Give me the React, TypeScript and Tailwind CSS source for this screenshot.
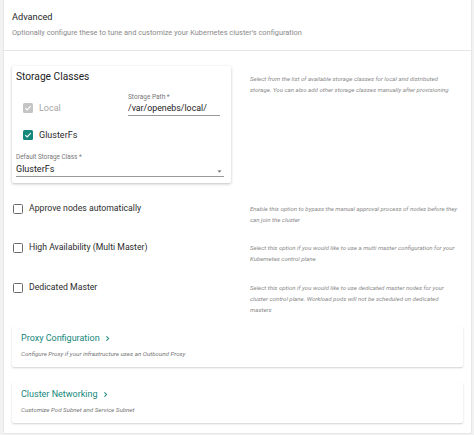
import React from 'react';

function Box({ checked, disabled }: { checked?: boolean; disabled?: boolean }) {
  if (checked) {
    return (
      <span
        className={`flex h-[10px] w-[10px] shrink-0 items-center justify-center rounded-[1.5px] ${
          disabled ? 'bg-[#c4c4c4]' : 'bg-[#15887c]'
        }`}
      >
        <svg viewBox="0 0 10 10" className="h-[8px] w-[8px]">
          <path d="M1.6 5.2 L4 7.4 L8.4 2.6" fill="none" stroke="#fff" strokeWidth="1.4" />
        </svg>
      </span>
    );
  }
  return <span className="block h-[10px] w-[10px] shrink-0 rounded-[1.5px] border-[1.5px] border-[#6b6b6b]" />;
}

function Desc({ lines, className = '' }: { lines: string[]; className?: string }) {
  return (
    <div className={`whitespace-nowrap text-[6.1px] italic leading-[11px] text-[#8a8a8a] ${className}`}>
      {lines.map((d) => (
        <div key={d}>{d}</div>
      ))}
    </div>
  );
}

function OptionRow({ label, desc, h }: { label: string; desc: string[]; h: string }) {
  return (
    <div className={`flex ${h}`}>
      <div className="flex h-[11px] w-[238px] items-center gap-[6px] pl-[1px]">
        <Box />
        <span className="text-[8.7px] leading-[11px] text-[#2d2d2d]">{label}</span>
      </div>
      <Desc lines={desc} />
    </div>
  );
}

function LinkCard({ title, desc }: { title: string; desc: string }) {
  return (
    <div className="h-[41px] rounded-[2px] bg-white px-[9px] pt-[6px] shadow-[0_1px_2px_rgba(0,0,0,0.18)]">
      <div className="flex items-center gap-[4px] text-[9px] leading-[12px] text-[#14867a]">
        {title}
        <svg viewBox="0 0 10 10" className="h-[7px] w-[7px]">
          <path d="M3.5 2 L6.5 5 L3.5 8" fill="none" stroke="#14867a" strokeWidth="1.5" />
        </svg>
      </div>
      <div className="mt-[6px] text-[6.2px] italic leading-[8px] text-[#777]">{desc}</div>
    </div>
  );
}

export default function App() {
  return (
    <div className="h-[435px] w-[474px] bg-[#f2f2f2] pl-[4px] font-['Roboto',sans-serif]">
      <div className="h-[433px] w-[467px] bg-white shadow-[0_0_1px_rgba(0,0,0,0.25)]">
        <div className="h-[51px] border-b border-[#e6e6e6] px-[8px] pt-[11px]">
          <div className="text-[9.2px] leading-[12px] text-[#262626]">Advanced</div>
          <div className="mt-[5px] text-[7.4px] leading-[10px] text-[#8a8a8a]">
            Optionally configure these to tune and customize your Kubernetes cluster's configuration
          </div>
        </div>

        <div className="px-[8px] pt-[15px]">
          <div className="flex h-[137px]">
            <div className="h-[117px] w-[219px] shrink-0 rounded-[2px] bg-white px-[4px] pt-[5px] shadow-[0_1px_3px_rgba(0,0,0,0.25)]">
              <div className="text-[10.2px] leading-[12px] text-[#222]">Storage Classes</div>
              <div className="flex h-[70px]">
                <div className="w-[112px] pl-[7px] pt-[20px]">
                  <div className="flex h-[10px] items-center gap-[6px]">
                    <Box checked disabled />
                    <span className="text-[9px] leading-[10px] text-[#a6a6a6]">Local</span>
                  </div>
                  <div className="mt-[17px] flex h-[10px] items-center gap-[6px]">
                    <Box checked />
                    <span className="text-[9px] leading-[10px] text-[#2b2b2b]">GlusterFs</span>
                  </div>
                </div>
                <div className="pt-[10px]">
                  <div className="text-[6.5px] leading-[8px] text-[#777]">Storage Path *</div>
                  <div className="mt-[1px] w-[92px] border-b border-[#9a9a9a] text-[8.8px] leading-[13px] text-[#222]">
                    /var/openebs/local/
                  </div>
                </div>
              </div>
              <div className="text-[6.4px] leading-[8px] text-[#777]">Default Storage Class *</div>
              <div className="mt-[2px] flex w-[208px] items-center justify-between border-b border-[#9a9a9a] text-[9px] leading-[13px] text-[#222]">
                GlusterFs
                <svg viewBox="0 0 10 10" className="mr-[1px] mt-[3px] h-[7px] w-[7px]">
                  <path d="M2 3.5 L8 3.5 L5 6.5 Z" fill="#666" />
                </svg>
              </div>
            </div>
            <Desc
              className="ml-[19px] pt-[7px]"
              lines={[
                'Select from the list of available storage classes for local and distributed',
                'storage. You can also add other storage classes manually after provisioning',
              ]}
            />
          </div>

          <OptionRow
            h="h-[39px]"
            label="Approve nodes automatically"
            desc={['Enable this option to bypass the manual approval process of nodes before they', 'can join the cluster']}
          />
          <OptionRow
            h="h-[40px]"
            label="High Availability (Multi Master)"
            desc={['Select this option if you would like to use a multi master configuration for your', 'Kubernetes control plane']}
          />
          <OptionRow
            h="h-[44px]"
            label="Dedicated Master"
            desc={[
              'Select this option if you would like to use dedicated master nodes for your',
              'cluster control plane. Workload pods will not be scheduled on dedicated',
              'masters',
            ]}
          />

          <div className="flex flex-col gap-[15px]">
            <LinkCard title="Proxy Configuration" desc="Configure Proxy if your infrastructure uses an Outbound Proxy" />
            <LinkCard title="Cluster Networking" desc="Customize Pod Subnet and Service Subnet" />
          </div>
        </div>
      </div>
    </div>
  );
}
